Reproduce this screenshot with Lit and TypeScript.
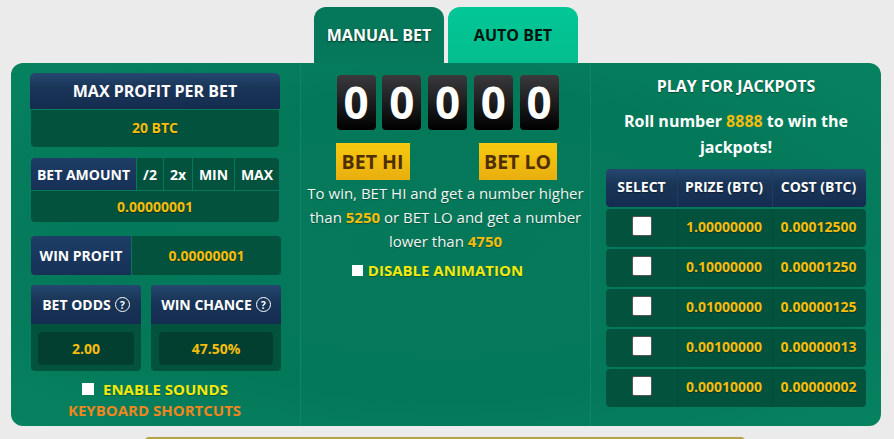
import { LitElement, html, css } from "lit";
import { customElement } from "lit/decorators.js";

const rows = [
  ["1.00000000", "0.00012500"],
  ["0.10000000", "0.00001250"],
  ["0.01000000", "0.00000125"],
  ["0.00100000", "0.00000013"],
  ["0.00010000", "0.00000002"],
];

@customElement("app-root")
export class AppRoot extends LitElement {
  static styles = css`
    :host { display: block; width: 894px; height: 439px; overflow: hidden; background: #ebebeb;
      font-family: "Open Sans", "Noto Sans", sans-serif; color: #fff; }
    * { box-sizing: border-box; }
    .tabs { display: flex; justify-content: flex-start; gap: 4px; padding: 7px 0 0 314px; height: 63px; }
    .tab { width: 130px; height: 56px; border-radius: 12px 12px 0 0; display: flex; align-items: center; justify-content: center;
      padding-bottom: 1px; font-size: 16px; font-weight: 700; }
    .tab.on { background: #05775a; color: #fff; text-shadow: 0 1px 2px #0009; }
    .tab.off { background: linear-gradient(#02c796, #04bd8e); color: #06140f; }
    .panel { margin-left: 11px; width: 870px; height: 363px; border-radius: 12px; display: grid; grid-template-columns: 289px 291px 290px;
      background: radial-gradient(ellipse at center, #05785a 0%, #04795a 60%, #06825f 100%); }
    .col { min-width: 0; }
    .mid { border-left: 1px solid #0f8569; border-right: 1px solid #0f8569; display: flex; flex-direction: column; align-items: center; }
    .left { padding: 10px 0 0 19px; display: flex; flex-direction: column; }
    .head { background: linear-gradient(#25486f 0%, #1a3558 40%, #142c50 100%); color: #fff; font-weight: 700; display: flex; align-items: center; justify-content: center; }
    .val { background: #03523e; color: #f5bd0c; font-weight: 700; font-size: 14px; display: flex; align-items: center; justify-content: center; text-shadow: 0 1px 1px #0006; }
    .maxp { width: 250px; }
    .maxp .head { height: 36px; font-size: 16px; border-radius: 5px 5px 0 0; }
    .maxp .val { height: 37px; margin: 1px 1px 0; padding-bottom: 2px; border-radius: 0 0 4px 4px; }
    .bet { width: 248px; margin: 11px 0 0 1px; }
    .betrow { display: flex; height: 32px; gap: 1px; font-size: 14px; font-weight: 700; }
    .betrow > div { display: flex; align-items: center; justify-content: center; background: #03523e; }
    .betrow .l { width: 105px; background: linear-gradient(#1d3e66, #173056); border-radius: 4px 0 0 0; }
    .betrow .a { width: 26px; } .betrow .b { width: 28px; } .betrow .c { width: 41px; } .betrow .d { flex: 1; border-radius: 0 4px 0 0; }
    .bet .val { height: 31px; margin-top: 1px; border-radius: 0 0 4px 4px; }
    .win { display: flex; width: 250px; height: 39px; margin: 14px 0 0 1px; border-radius: 4px; overflow: hidden; }
    .win .head { width: 100px; font-size: 14px; background: linear-gradient(#1d3e66, #173056); }
    .win .val { flex: 1; margin-left: 1px; }
    .cards { display: flex; gap: 10px; margin: 10px 0 0 1px; }
    .card { background: #03523e; border-radius: 4px; height: 86px; }
    .card.o { width: 110px; } .card.c { width: 130px; }
    .card .head { height: 39px; font-size: 14px; gap: 4px; border-radius: 4px 4px 0 0; }
    .q { width: 15px; height: 15px; border: 1px solid #fff; border-radius: 50%; font-size: 10px; display: flex; align-items: center; justify-content: center; }
    .inner { margin: 8px 7px 0; height: 33px; background: #033f30; border-radius: 4px; color: #f5bd0c; font-size: 14px; font-weight: 700; display: flex; align-items: center; justify-content: center; }
    .card.c .inner { margin: 8px 8px 0; }
    .box { background: #fff; display: block; flex: none; }
    .check { display: flex; align-items: center; font-weight: 700; color: #f3ea0b; font-size: 15px; text-shadow: 0 1px 1px #0005; white-space: nowrap; }
    .snd { margin: 10px 0 0 52px; gap: 9px; height: 16px; }
    .snd .box { width: 12px; height: 12px; }
    .kbd { margin: 3px 0 0 38px; color: #f0861d; font-size: 15px; font-weight: 700; line-height: 20px; white-space: nowrap; }
    .digits { display: flex; gap: 6.75px; margin: 12px 0 0 4px; }
    .digit { width: 39px; height: 55px; border-radius: 4px; background: linear-gradient(#3a3a3e, #000); font-size: 44px; font-weight: 700; line-height: 55px; text-align: center; color: #fff; }
    .btns { display: flex; justify-content: space-between; width: 221px; margin: 13px 0 0 1px; }
    .btn { height: 37px; background: linear-gradient(#f7c90f, #e9ae0f); color: #4f2f02; font-size: 19.5px; font-weight: 700; display: flex; align-items: center; justify-content: center; white-space: nowrap; }
    .btn.hi { width: 74px; } .btn.lo { width: 78px; }
    .desc { width: 288px; margin-top: 1px; text-align: center; font-size: 15px; line-height: 24px; color: #f2f5f3; text-shadow: 0 1px 1px #0005; }
    .desc b, .roll b { color: #f5bd0c; font-weight: 700; }
    .dis { margin: 7px 0 0 -16px; gap: 5px; height: 20px; }
    .dis .box { width: 11px; height: 11px; }
    .right { padding: 0 0 0 15px; display: flex; flex-direction: column; }
    .title { width: 260px; text-align: center; margin-top: 13px; font-size: 16px; font-weight: 700; line-height: 20px; text-shadow: 0 1px 1px #0006; }
    .roll { width: 260px; text-align: center; margin-top: 12px; font-size: 16px; font-weight: 700; line-height: 26px; }
    .table { width: 260px; margin-top: 9px; display: flex; flex-direction: column; gap: 2px; }
    .tr { display: grid; grid-template-columns: 71px 95px 94px; height: 38px; border-radius: 4px; overflow: hidden; background: #03523e; }
    .tr > div { display: flex; align-items: center; justify-content: center; font-size: 14px; font-weight: 700; color: #f5bd0c; text-shadow: 0 1px 1px #0006; padding-bottom: 3px; }
    .tr > div + div { border-left: 1px solid #044a38; padding-right: 2px; }
    .tr.th { background: linear-gradient(#25486f 0%, #1a3558 40%, #142c50 100%); }
    .tr.th > div { color: #fff; font-size: 14px; white-space: nowrap; }
    .tr.th > div + div { border-left: 1px solid #1e3e5f; }
    .tr .box { width: 18px; height: 18px; border-radius: 1px; box-shadow: 0 0 0 1px #555; margin-bottom: 1px; }
    .strip { width: 600px; height: 4px; margin: 11px 0 0 145px; border-radius: 6px 6px 0 0; background: #b5a24a; }
  `;

  render() {
    return html`
      <div class="tabs">
        <div class="tab on">MANUAL BET</div>
        <div class="tab off">AUTO BET</div>
      </div>
      <div class="panel">
        <div class="col left">
          <div class="maxp">
            <div class="head">MAX PROFIT PER BET</div>
            <div class="val">20 BTC</div>
          </div>
          <div class="bet">
            <div class="betrow">
              <div class="l">BET AMOUNT</div><div class="a">/2</div><div class="b">2x</div><div class="c">MIN</div><div class="d">MAX</div>
            </div>
            <div class="val">0.00000001</div>
          </div>
          <div class="win">
            <div class="head">WIN PROFIT</div>
            <div class="val">0.00000001</div>
          </div>
          <div class="cards">
            <div class="card o">
              <div class="head">BET ODDS <span class="q">?</span></div>
              <div class="inner">2.00</div>
            </div>
            <div class="card c">
              <div class="head">WIN CHANCE <span class="q">?</span></div>
              <div class="inner">47.50%</div>
            </div>
          </div>
          <div class="check snd"><span class="box"></span>ENABLE SOUNDS</div>
          <div class="kbd">KEYBOARD SHORTCUTS</div>
        </div>
        <div class="col mid">
          <div class="digits">
            ${[0, 0, 0, 0, 0].map((d) => html`<div class="digit">${d}</div>`)}
          </div>
          <div class="btns">
            <div class="btn hi">BET HI</div>
            <div class="btn lo">BET LO</div>
          </div>
          <div class="desc">To win, BET HI and get a number higher than <b>5250</b> or BET LO and get a number lower than <b>4750</b></div>
          <div class="check dis"><span class="box"></span>DISABLE ANIMATION</div>
        </div>
        <div class="col right">
          <div class="title">PLAY FOR JACKPOTS</div>
          <div class="roll">Roll number <b>8888</b> to win the jackpots!</div>
          <div class="table">
            <div class="tr th"><div>SELECT</div><div>PRIZE (BTC)</div><div>COST (BTC)</div></div>
            ${rows.map((r) => html`<div class="tr"><div><span class="box"></span></div><div>${r[0]}</div><div>${r[1]}</div></div>`)}
          </div>
        </div>
      </div>
      <div class="strip"></div>
    `;
  }
}
